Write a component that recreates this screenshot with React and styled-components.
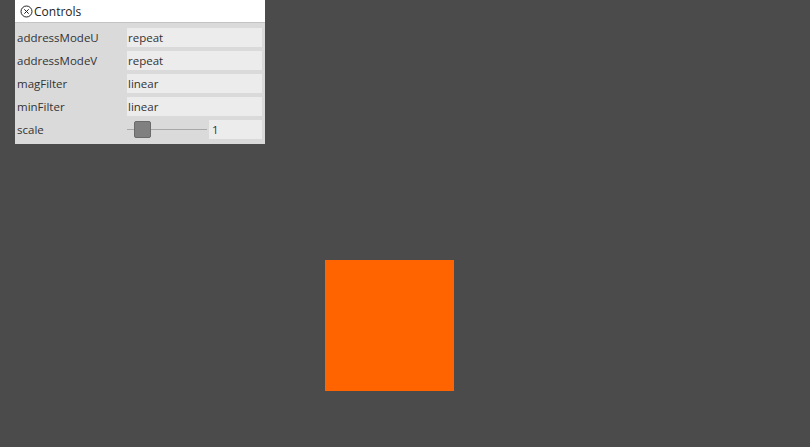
import React from "react";
import styled, { createGlobalStyle } from "styled-components";

const Global = createGlobalStyle`
  html, body { margin: 0; padding: 0; background: #4b4b4b; }
  body { width: 810px; height: 447px; overflow: hidden; }
`;

const Page = styled.div`
  position: relative;
  width: 810px;
  height: 447px;
  background: #4b4b4b;
  display: grid;
  place-items: center;
`;

const Panel = styled.div`
  position: absolute;
  left: 15px;
  top: 0;
  width: 250px;
  background: #dadada;
  font-family: "Open Sans", "Noto Sans", sans-serif;
  font-size: 11.5px;
  color: #333;
  padding-bottom: 5px;
`;

const Title = styled.div`
  height: 22px;
  background: #fff;
  border-bottom: 1px solid #c4c4c4;
  display: flex;
  align-items: center;
  gap: 1px;
  padding-left: 5px;
  font-size: 12px;
  color: #222;
`;

const Rows = styled.div`
  display: flex;
  flex-direction: column;
  gap: 4px;
  padding: 5px 3px 0 2px;
`;

const Row = styled.div`
  display: grid;
  grid-template-columns: 110px 1fr;
  height: 19px;
  align-items: center;
`;

const Label = styled.div`
  color: #333;
`;

const Value = styled.div`
  height: 19px;
  background: #ececec;
  display: flex;
  align-items: center;
  padding-left: 1px;
  color: #333;
`;

const SliderWrap = styled.div`
  display: flex;
  align-items: center;
  gap: 2px;
  height: 19px;
`;

const Track = styled.div`
  position: relative;
  width: 80px;
  height: 19px;
  display: flex;
  align-items: center;
  &::before {
    content: "";
    width: 100%;
    height: 1px;
    background: #a8a8a8;
  }
`;

const Thumb = styled.div`
  position: absolute;
  left: 7px;
  top: 1px;
  width: 15px;
  height: 15px;
  background: #808080;
  border: 1px solid #6a6a6a;
  border-radius: 2px;
`;

const NumberBox = styled(Value)`
  flex: 1;
  padding-left: 3px;
`;

const Square = styled.div`
  width: 129px;
  height: 131px;
  background: #ff6400;
  margin-left: -31px;
  margin-top: 204px;
`;

const CloseIcon = () => (
  <svg width="13" height="13" viewBox="0 0 13 13">
    <circle cx="6.5" cy="6.5" r="5.5" fill="none" stroke="#222" strokeWidth="1" />
    <path d="M4.3 4.3 L8.7 8.7 M8.7 4.3 L4.3 8.7" stroke="#222" strokeWidth="1" />
  </svg>
);

const rows = [
  ["addressModeU", "repeat"],
  ["addressModeV", "repeat"],
  ["magFilter", "linear"],
  ["minFilter", "linear"],
];

export default function App() {
  return (
    <>
      <Global />
      <Page>
        <Square />
        <Panel>
          <Title>
            <CloseIcon />
            Controls
          </Title>
          <Rows>
            {rows.map(([k, v]) => (
              <Row key={k}>
                <Label>{k}</Label>
                <Value>{v}</Value>
              </Row>
            ))}
            <Row>
              <Label>scale</Label>
              <SliderWrap>
                <Track>
                  <Thumb />
                </Track>
                <NumberBox>1</NumberBox>
              </SliderWrap>
            </Row>
          </Rows>
        </Panel>
      </Page>
    </>
  );
}
